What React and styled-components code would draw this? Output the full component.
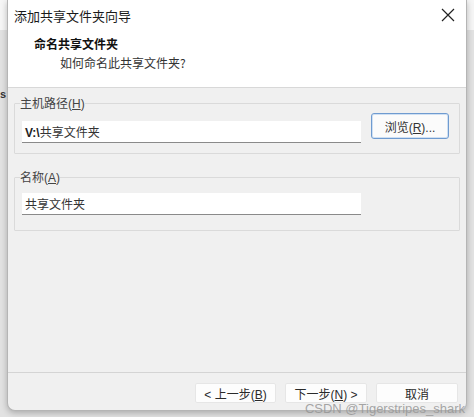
import React from "react";
import styled, { createGlobalStyle } from "styled-components";

const Global = createGlobalStyle`
  html, body {
    margin: 0;
    padding: 0;
    width: 474px;
    height: 417px;
    overflow: hidden;
    background: #e4e4e4;
    font-family: "Noto Sans CJK SC", "Noto Sans", sans-serif;
  }
`;

const Desk = styled.div`
  position: relative;
  width: 474px;
  height: 417px;
  background: linear-gradient(#f6f6f6 0, #f6f6f6 30px, #e2e2e2 30px);
  overflow: hidden;
`;

const Window = styled.div`
  margin-left: 7px;
  width: 458px;
  height: 410px;
  background: #f0f0f0;
  border: 1px solid #b5b5b5;
  border-top: none;
  border-radius: 0 0 8px 8px;
  box-shadow: 0 2px 6px rgba(0, 0, 0, 0.25);
  display: flex;
  flex-direction: column;
  overflow: hidden;
`;

const TitleBar = styled.div`
  height: 30px;
  background: #fff;
  display: flex;
  align-items: center;
  justify-content: space-between;
  padding: 0 10px 0 6px;
  font-size: 13px;
  color: #1a1a1a;
`;

const Close = styled.div`
  width: 16px;
  height: 16px;
  display: flex;
  align-items: center;
  justify-content: center;
`;

const Header = styled.div`
  height: 58px;
  background: #fff;
  border-bottom: 1px solid #d8d8d8;
  padding: 2px 0 0 26px;
  box-sizing: border-box;
`;

const Heading = styled.div`
  font-size: 12px;
  font-weight: bold;
  color: #111;
  line-height: 20px;
  margin-top: 2px;
`;

const Sub = styled.div`
  font-size: 12px;
  color: #333;
  line-height: 18px;
  padding-left: 26px;
`;

const Body = styled.div`
  flex: 1;
  padding: 7px 6px 0 6px;
  display: flex;
  flex-direction: column;
  gap: 15px;
`;

const Group = styled.fieldset`
  margin: 0;
  border: 1px solid #dadada;
  border-radius: 1px;
  padding: 2px 10px 0 7px;
  height: ${(p) => p.h}px;
  box-sizing: border-box;
  display: flex;
  align-items: flex-start;
  gap: 10px;
`;

const Legend = styled.legend`
  padding: 0;
  margin-left: -2px;
  font-size: 12px;
  color: #444;
  line-height: 16px;
`;

const Key = styled.span`
  text-decoration: underline;
  font-family: "Liberation Sans", sans-serif;
`;

const Paren = styled.span`
  font-family: "Liberation Sans", sans-serif;
`;

const Field = styled.div`
  width: 339px;
  height: 22px;
  background: #fff;
  border-bottom: 1px solid #8a8a8a;
  box-sizing: border-box;
  font-size: 12px;
  color: #333;
  line-height: 21px;
  padding-left: 3px;
  margin-top: ${(p) => p.top || 0}px;
`;

const Latin = styled.span`
  font-family: "Liberation Sans", sans-serif;
  font-weight: bold;
  color: #222;
`;

const Browse = styled.div`
  width: 76px;
  height: 24px;
  border: 1px solid #6f9bd0;
  border-radius: 3px;
  background: #fbfbfb;
  box-shadow: inset 0 0 0 1px #cfe0f3;
  display: flex;
  align-items: center;
  justify-content: center;
  font-size: 12px;
  color: #333;
  margin-top: -1px;
`;

const Footer = styled.div`
  height: 38px;
  border-top: 1px solid #d4d4d4;
  display: flex;
  justify-content: flex-end;
  align-items: flex-start;
  gap: 9px;
  padding: 10px 8px 0 0;
  box-sizing: border-box;
`;

const Button = styled.div`
  width: ${(p) => p.w || 82}px;
  height: 20px;
  background: #fdfdfd;
  border: 1px solid #e6e6e6;
  border-radius: 2px;
  box-sizing: border-box;
  display: flex;
  align-items: center;
  justify-content: center;
  font-size: 12px;
  color: #2a2a2a;
  white-space: pre;
`;

const Mark = styled.div`
  position: absolute;
  right: 9px;
  bottom: 0px;
  font-family: "Liberation Sans", sans-serif;
  font-size: 13px;
  color: rgba(150, 150, 150, 0.85);
  line-height: 16px;
`;

const EdgeS = styled.div`
  position: absolute;
  left: 0;
  top: 88px;
  font-family: "Liberation Sans", sans-serif;
  font-weight: bold;
  font-size: 11px;
  color: #333;
`;

export default function App() {
  return (
    <Desk>
      <Global />
      <EdgeS>s</EdgeS>
      <Window>
        <TitleBar>
          添加共享文件夹向导
          <Close>
            <svg width="14" height="14" viewBox="0 0 14 14">
              <path d="M1 1L13 13M13 1L1 13" stroke="#222" strokeWidth="1.2" />
            </svg>
          </Close>
        </TitleBar>
        <Header>
          <Heading>命名共享文件夹</Heading>
          <Sub>如何命名此共享文件夹?</Sub>
        </Header>
        <Body>
          <Group h={59}>
            <Legend>
              主机路径<Paren>(</Paren><Key>H</Key><Paren>)</Paren>
            </Legend>
            <Field top={7}>
              <Latin>V:\</Latin>共享文件夹
            </Field>
            <Browse>
              <span>
                浏览<Paren>(</Paren><Key>R</Key><Paren>)...</Paren>
              </span>
            </Browse>
          </Group>
          <Group h={62}>
            <Legend>
              名称<Paren>(</Paren><Key>A</Key><Paren>)</Paren>
            </Legend>
            <Field top={5}>共享文件夹</Field>
          </Group>
        </Body>
        <Footer>
          <Button w={81}>
            <span>
              <Paren>{"< "}</Paren>上一步<Paren>(</Paren><Key>B</Key><Paren>)</Paren>
            </span>
          </Button>
          <Button>
            <span>
              下一步<Paren>(</Paren><Key>N</Key><Paren>{") >"}</Paren>
            </span>
          </Button>
          <Button>取消</Button>
        </Footer>
      </Window>
      <Mark>CSDN @Tigerstripes_shark</Mark>
    </Desk>
  );
}
